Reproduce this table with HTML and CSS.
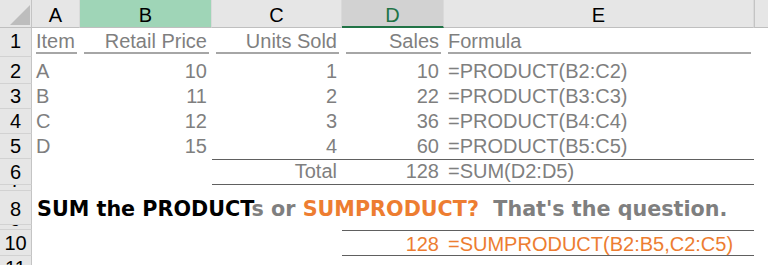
FILE: index.html
```html
<!DOCTYPE html>
<html lang="en">
<head>
<meta charset="utf-8">
<title>SUMPRODUCT</title>
<link rel="stylesheet" href="styles.css">
</head>
<body>
<div class="sheet">
  <div class="row head">
    <div class="corner"><svg width="20" height="20" viewBox="0 0 20 20"><polygon points="20,0 20,20 0,20" fill="#bdbdbd"/></svg></div>
    <div class="col">A</div>
    <div class="col sel">B</div>
    <div class="col">C</div>
    <div class="col active">D</div>
    <div class="col">E</div>
    <div class="col edge"></div>
  </div>

  <div class="row r1">
    <div class="rh">1</div>
    <div class="c th">Item</div>
    <div class="c th r">Retail Price</div>
    <div class="c th r">Units Sold</div>
    <div class="c th r">Sales</div>
    <div class="c th">Formula</div>
    <div class="c"></div>
  </div>

  <div class="row">
    <div class="rh">2</div>
    <div class="c">A</div>
    <div class="c r">10</div>
    <div class="c r">1</div>
    <div class="c r">10</div>
    <div class="c">=PRODUCT(B2:C2)</div>
    <div class="c"></div>
  </div>

  <div class="row">
    <div class="rh">3</div>
    <div class="c">B</div>
    <div class="c r">11</div>
    <div class="c r">2</div>
    <div class="c r">22</div>
    <div class="c">=PRODUCT(B3:C3)</div>
    <div class="c"></div>
  </div>

  <div class="row">
    <div class="rh">4</div>
    <div class="c">C</div>
    <div class="c r">12</div>
    <div class="c r">3</div>
    <div class="c r">36</div>
    <div class="c">=PRODUCT(B4:C4)</div>
    <div class="c"></div>
  </div>

  <div class="row">
    <div class="rh">5</div>
    <div class="c">D</div>
    <div class="c r">15</div>
    <div class="c r">4</div>
    <div class="c r">60</div>
    <div class="c">=PRODUCT(B5:C5)</div>
    <div class="c"></div>
  </div>

  <div class="row r6">
    <div class="rh">6</div>
    <div class="c"></div>
    <div class="c"></div>
    <div class="c r ruled">Total</div>
    <div class="c r ruled">128</div>
    <div class="c ruled">=SUM(D2:D5)</div>
    <div class="c"></div>
  </div>

  <div class="row thin">
    <div class="rh">7</div>
    <div class="c wide"></div>
  </div>

  <div class="row r8">
    <div class="rh">8</div>
    <div class="c wide title"><span class="line"><span class="ink">SUM the PRODUCT</span><span class="muted">s or </span><span class="accent">SUMPRODUCT?</span>  <span class="muted">That's the question.</span></span></div>
  </div>

  <div class="row thin">
    <div class="rh">9</div>
    <div class="c wide"></div>
  </div>

  <div class="row r10">
    <div class="rh">10</div>
    <div class="c"></div>
    <div class="c"></div>
    <div class="c"></div>
    <div class="c r ruled accent">128</div>
    <div class="c ruled accent">=SUMPRODUCT(B2:B5,C2:C5)</div>
    <div class="c"></div>
  </div>

  <div class="row">
    <div class="rh">11</div>
    <div class="c wide"></div>
  </div>
</div>
</body>
</html>
```

FILE: styles.css
```css
html, body {
  margin: 0;
  padding: 0;
  background: #ffffff;
  overflow: hidden;
}

body {
  font-family: "Liberation Sans", Arial, sans-serif;
}

/* worksheet grid: row headers + columns A..F */
.sheet {
  display: grid;
  grid-template-columns: 32px 48px 132px 130px 102px 310px 14px;
  grid-template-rows: 28px 29px 27px 25px 25px 25px 26px 6px 34px 5px 26px 25px;
  width: 768px;
}

.row {
  display: contents;
}

/* column header strip */
.corner {
  box-sizing: border-box;
  background: #e6e6e6;
  border-right: 1px solid #c4c4c4;
  border-bottom: 1px solid #bfbfbf;
  display: flex;
  align-items: flex-end;
  justify-content: flex-end;
  padding: 0 1px 2px 0;
}

.corner svg {
  display: block;
}

.col {
  box-sizing: border-box;
  background: #e6e6e6;
  border-bottom: 1px solid #bfbfbf;
  border-right: 1px solid #dadada;
  display: flex;
  align-items: flex-end;
  justify-content: center;
  padding-bottom: 2px;
  font-size: 20px;
  line-height: 20px;
  color: #000000;
}

.col.sel {
  background: #9fd5b7;
}

.col.active {
  background: #d2d2d2;
  color: #217346;
  border-bottom: 2px solid #217346;
  padding-bottom: 1px;
}

.col.edge {
  border-left: 1px solid #c4c4c4;
  border-right: 0;
}

/* row numbers */
.rh {
  box-sizing: border-box;
  background: #e6e6e6;
  border-right: 1px solid #c4c4c4;
  border-bottom: 1px solid #d2d2d2;
  display: flex;
  align-items: flex-end;
  justify-content: center;
  padding-bottom: 2px;
  font-size: 20px;
  line-height: 20px;
  color: #000000;
  overflow: hidden;
}

/* cells */
.c {
  box-sizing: border-box;
  display: flex;
  align-items: flex-end;
  padding: 0 5px 3px 4px;
  font-size: 20px;
  line-height: 20px;
  color: #7f7f7f;
  white-space: nowrap;
  min-width: 0;
}

.c.r {
  justify-content: flex-end;
}

.c.wide {
  grid-column: 2 / 8;
}

/* heading row with accounting-style underline */
.r1 > .rh {
  padding-bottom: 5px;
}

.r1 > .c {
  padding-bottom: 6px;
}

.c.th {
  background: linear-gradient(#a6a6a6, #a6a6a6) no-repeat 4px 24px / calc(100% - 7px) 2px;
}

/* total rows */
.c.ruled {
  border-top: 1px solid #606060;
  border-bottom: 1px solid #606060;
}

.r6 > .c {
  padding-bottom: 3px;
}

.r10 > .c {
  padding-bottom: 1px;
}

.thin > .rh {
  padding-bottom: 0;
}

/* statement line */
.r8 > .rh {
  padding-bottom: 5px;
}

.c.title {
  overflow: visible;
  padding: 0 0 4px 5px;
  font-family: "DejaVu Sans", Verdana, sans-serif;
  font-weight: 700;
  font-size: 20.7px;
  line-height: 24px;
  color: #000000;
}

.title .line {
  white-space: pre;
}

.ink {
  color: #000000;
}

.muted {
  color: #7f7f7f;
}

.accent {
  color: #ed7d31;
}
```
